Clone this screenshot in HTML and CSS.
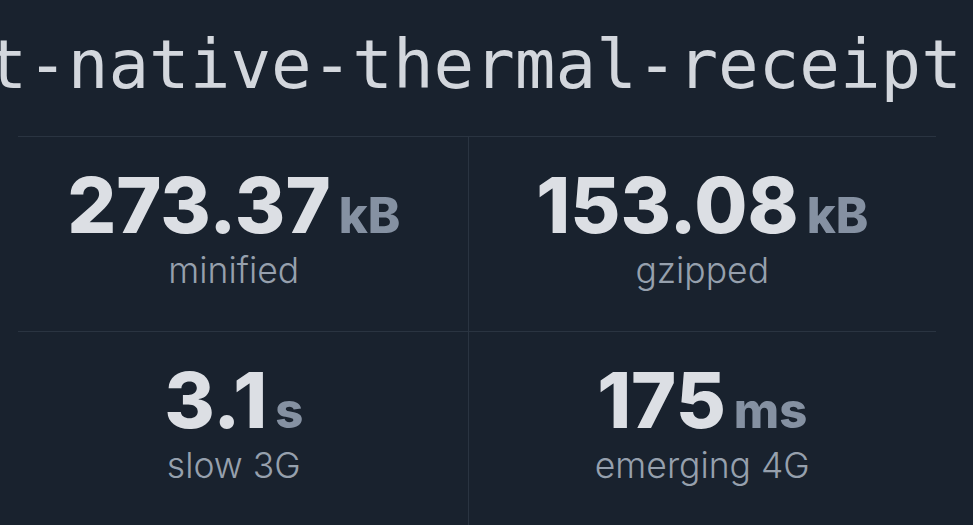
FILE: index.html
```html
<!DOCTYPE html>
<html lang="en">
<head>
<meta charset="utf-8">
<title>react-native-thermal-receipt-printer</title>
<link rel="stylesheet" href="styles.css">
</head>
<body>
<main class="page">
  <h1 class="pkg-name">react-native-thermal-receipt-printer</h1>
  <section class="stats">
    <div class="rule"></div>
    <div class="stat-row">
      <div class="stat">
        <div class="stat-value">273.37<span class="unit">kB</span></div>
        <div class="stat-label">minified</div>
      </div>
      <div class="stat stat-right">
        <div class="stat-value">153.08<span class="unit">kB</span></div>
        <div class="stat-label">gzipped</div>
      </div>
    </div>
    <div class="rule"></div>
    <div class="stat-row">
      <div class="stat">
        <div class="stat-value">3.1<span class="unit">s</span></div>
        <div class="stat-label">slow 3G</div>
      </div>
      <div class="stat stat-right">
        <div class="stat-value">175<span class="unit">ms</span></div>
        <div class="stat-label">emerging 4G</div>
      </div>
    </div>
    <div class="rule"></div>
  </section>
</main>
</body>
</html>
```
FILE: styles.css
```css
html, body {
  margin: 0;
  padding: 0;
  background: #19222e;
  overflow: hidden;
}

.page {
  width: 973px;
  height: 525px;
  overflow: hidden;
}

.pkg-name {
  margin: 0 0 31px -176px;
  padding-top: 25px;
  font-family: "DejaVu Sans Mono", "Liberation Mono", monospace;
  font-weight: 300;
  font-size: 67.5px;
  line-height: 80px;
  color: #d3d7dd;
  white-space: nowrap;
}

.stats {
  width: 936px;
}

.rule {
  height: 1px;
  margin-left: 18px;
  background: #2a3441;
}

.stat-row {
  display: flex;
}

.stat {
  flex: 1 1 0;
  padding: 28px 0 40px;
  text-align: center;
}

.stat-right {
  border-left: 1px solid #2a3441;
}

.stat-value {
  font-family: Inter, "Noto Sans", sans-serif;
  font-weight: 800;
  font-size: 77px;
  line-height: 80px;
  color: #dcdfe4;
  white-space: nowrap;
}

.unit {
  margin-left: 8px;
  font-size: 49px;
  line-height: 1;
  color: #8591a2;
}

.stat-label {
  margin-top: 6px;
  font-family: Inter, "Noto Sans", sans-serif;
  font-weight: 300;
  font-size: 35.5px;
  line-height: 40px;
  color: #96a0ad;
}
```
